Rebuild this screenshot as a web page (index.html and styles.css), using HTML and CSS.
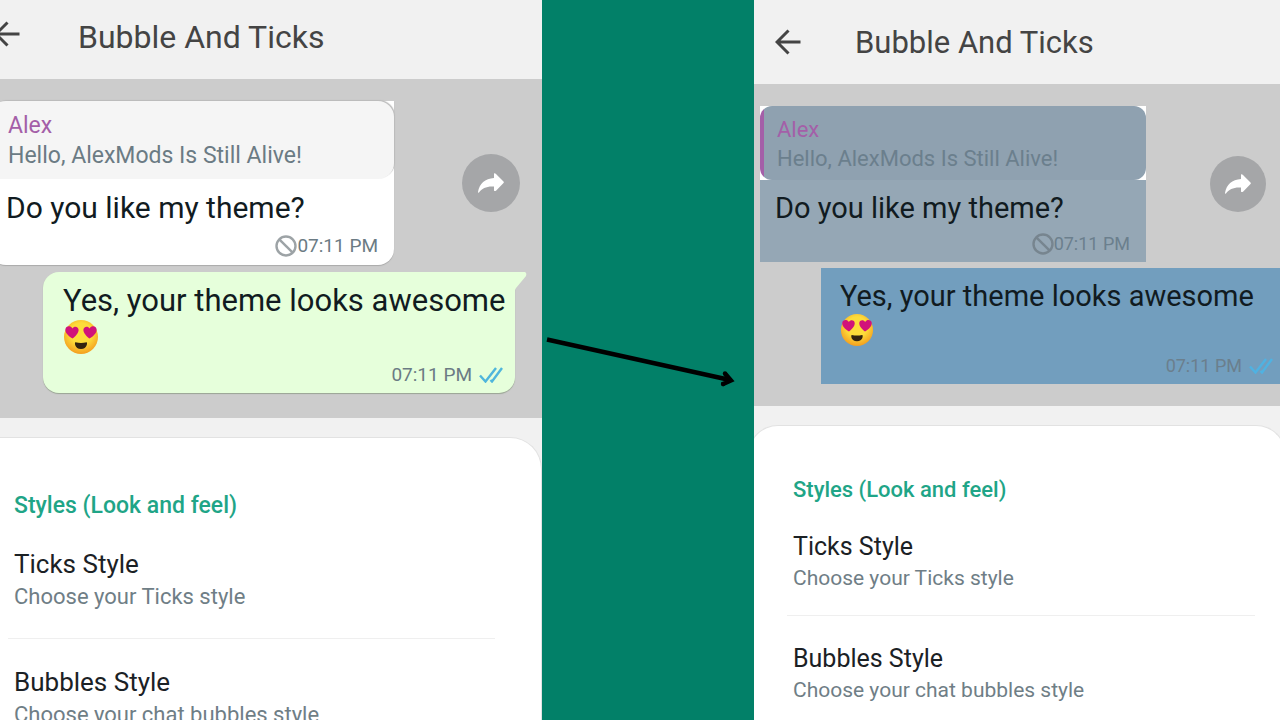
FILE: index.html
```html
<!DOCTYPE html>
<html lang="en">
<head>
<meta charset="utf-8">
<title>Bubble And Ticks</title>
<link rel="stylesheet" href="styles.css">
</head>
<body>
<svg class="defs" aria-hidden="true">
  <defs>
    <radialGradient id="face" cx="50%" cy="40%" r="62%">
      <stop offset="0.5" stop-color="#fddc3a"/>
      <stop offset="1" stop-color="#f39a1d"/>
    </radialGradient>
    <symbol id="back" viewBox="0 0 26 26"><path d="M25.500 13H3M13.500 1.500L2 13L13.500 24.500" fill="none" stroke="currentColor" stroke-width="3"/></symbol>
    <symbol id="share" viewBox="0 0 26 20"><path d="M16 0.500Q17 0 18 1L25.500 8.500Q26.300 9.300 25.500 10L18 17.800Q16.500 18.500 16 17.500V13.500C9 13 4 15 .8 19.800Q0 20 0 19C1.500 10.500 7 5.500 16 5Z" fill="#fff"/></symbol>
    <symbol id="ban" viewBox="0 0 22 22"><g fill="none" stroke="currentColor" stroke-width="2.400"><circle cx="11" cy="11" r="9.500"/><path d="M4.300 4.300L17.700 17.700"/></g></symbol>
    <symbol id="ticks" viewBox="0 0 24 16"><path d="M1 8.500L6.500 14.500L17 1M11.500 13L13 14.500L23 1" fill="none" stroke="currentColor" stroke-width="2.400"/></symbol>
    <symbol id="love" viewBox="0 0 36 36">
      <circle cx="18" cy="18" r="17" fill="url(#face)"/>
      <path d="M9.500 19.500C5 17 2 13.500 2.400 10.300C2.800 7 7.400 6.200 9.300 9.400C11.400 6.400 15.700 7.600 15.600 11C15.500 14 12.500 17.300 9.500 19.500Z" fill="#d1127a"/>
      <path d="M26.500 19.500C31 17 34 13.500 33.600 10.300C33.200 7 28.600 6.200 26.700 9.400C24.600 6.400 20.300 7.600 20.400 11C20.500 14 23.500 17.300 26.500 19.500Z" fill="#d1127a"/>
      <path d="M12.500 23.300Q18 24.500 23.500 23.300C24.600 23.100 24.600 30 18 30S11.400 23.100 12.500 23.300Z" fill="#33240f"/>
    </symbol>
  </defs>
</svg>
<main class="compare">
  <section class="phone before">
    <header class="bar">
      <button class="back" aria-label="Back"><svg><use href="#back"/></svg></button>
      <h1 class="bar-title">Bubble And Ticks</h1>
    </header>
    <div class="chat">
      <div class="incoming">
        <article class="bubble-in">
          <div class="quote-back">
            <div class="quote"><p class="quote-name">Alex</p><p class="quote-text">Hello, AlexMods Is Still Alive!</p></div>
          </div>
          <p class="message">Do you like my theme?</p>
          <p class="meta"><svg class="ban"><use href="#ban"/></svg>07:11 PM</p>
        </article>
        <button class="share" aria-label="Forward"><svg><use href="#share"/></svg></button>
      </div>
      <article class="bubble-out">
        <svg class="tail" viewBox="0 0 12 18"><path d="M0 0H10Q12 1 11 4L1 16L0 18Z" fill="#e6ffdb"/></svg>
        <p class="message">Yes, your theme looks awesome</p>
        <svg class="emoji" role="img" aria-label="😍"><use href="#love"/></svg>
        <p class="meta">07:11 PM<svg class="ticks"><use href="#ticks"/></svg></p>
      </article>
    </div>
    <div class="sheet">
      <h2 class="sheet-title">Styles (Look and feel)</h2>
      <ul class="options">
        <li class="option"><button><span class="name">Ticks Style</span><span class="hint">Choose your Ticks style</span></button></li>
        <li class="option"><button><span class="name">Bubbles Style</span><span class="hint">Choose your chat bubbles style</span></button></li>
      </ul>
    </div>
  </section>

  <div class="middle">
    <svg class="arrow" viewBox="0 0 212 80" aria-hidden="true"><path d="M5 19.500L188 60M183 53.500L189 60.500L180 64.500" fill="none" stroke="#000" stroke-width="4.400"/><circle cx="183" cy="53.500" r="2.200"/><circle cx="181" cy="64" r="2.200"/></svg>
  </div>

  <section class="phone after">
    <header class="bar">
      <button class="back" aria-label="Back"><svg><use href="#back"/></svg></button>
      <h1 class="bar-title">Bubble And Ticks</h1>
    </header>
    <div class="chat">
      <div class="incoming">
        <article class="bubble-in">
          <div class="quote-back">
            <div class="quote"><p class="quote-name">Alex</p><p class="quote-text">Hello, AlexMods Is Still Alive!</p></div>
          </div>
          <p class="message">Do you like my theme?</p>
          <p class="meta"><svg class="ban"><use href="#ban"/></svg>07:11 PM</p>
        </article>
        <button class="share" aria-label="Forward"><svg><use href="#share"/></svg></button>
      </div>
      <article class="bubble-out">
        <p class="message">Yes, your theme looks awesome</p>
        <svg class="emoji" role="img" aria-label="😍"><use href="#love"/></svg>
        <p class="meta">07:11 PM<svg class="ticks"><use href="#ticks"/></svg></p>
      </article>
    </div>
    <div class="sheet">
      <h2 class="sheet-title">Styles (Look and feel)</h2>
      <ul class="options">
        <li class="option"><button><span class="name">Ticks Style</span><span class="hint">Choose your Ticks style</span></button></li>
        <li class="option"><button><span class="name">Bubbles Style</span><span class="hint">Choose your chat bubbles style</span></button></li>
      </ul>
    </div>
  </section>
</main>
</body>
</html>
```
FILE: styles.css
```css
* { box-sizing: border-box; }
body, h1, h2, p, ul { margin: 0; padding: 0; }
body { font-family: Roboto, "Liberation Sans", sans-serif; background: #028068; }
button { border: 0; padding: 0; background: none; font: inherit; color: inherit; text-align: left; }
svg { display: block; flex: none; }
.defs { position: absolute; width: 0; height: 0; }

.compare { display: grid; grid-template-columns: 542fr 212fr 526fr; height: 100vh; overflow: hidden; }
.phone { display: flex; flex-direction: column; min-width: 0; overflow: hidden; background: #f1f1f1; }
.middle { display: flex; align-items: center; background: #028068; }
.arrow { width: 100%; }

/* Top bar */
.bar { display: flex; align-items: center; flex: none; color: #444; }
.back svg { width: 26px; height: 26px; }
.bar-title { font-weight: 400; white-space: nowrap; }

/* Conversation */
.chat { display: flex; flex-direction: column; flex: none; background: #ccc; }
.incoming { display: flex; align-items: center; justify-content: space-between; }
.quote-name { color: #a45fa8; }
.quote-text, .meta { color: #6b7b84; }
.message { color: #111b21; white-space: nowrap; }
.meta { display: flex; align-items: center; justify-content: flex-end; }
.ban { width: 22px; height: 22px; color: #9da3a6; }
.ticks { width: 24px; height: 16px; margin-left: 7px; color: #4fb6dc; }
.emoji { width: 36px; height: 36px; }
.share { display: grid; place-items: center; border-radius: 50%; background: #a5a6a8; }
.share svg { width: 26px; height: 20px; }

/* Settings sheet */
.sheet { flex: 1; background: #fff; border: 1px solid #e2e2e2; border-bottom: 0; }
.sheet-title { font-weight: 500; color: #1fa587; }
.options { list-style: none; }
.option + .option { border-top: 1px solid #efefef; }
.name, .hint { display: block; white-space: nowrap; }
.name { color: #1b2125; }
.hint { color: #6f7e86; }

/* Stock theme */
.before .bar { height: 79px; padding-bottom: 5px; gap: 58px; }
.before .back { margin: -6px 0 0 -6px; }
.before .bar-title { font-size: 32px; line-height: 40px; }
.before .chat { height: 339px; padding: 22px 22px 24px 0; gap: 7px; }
.before .bubble-in { width: 404px; height: 164px; margin-left: -10px; padding-right: 16px; border-radius: 16px; border-top-right-radius: 0; background: #fff; box-shadow: 0 1px 1px #aaa; }
.before .quote-back { margin-right: -16px; }
.before .quote { height: 78px; padding: 10px 0 0 18px; border-radius: 16px; border-bottom-left-radius: 0; background: #f5f5f5; box-shadow: 1px -1px 1px #bbb; }
.before .quote-name, .before .quote-text { font-size: 23px; line-height: 30px; }
.before .message { font-size: 30px; line-height: 36px; }
.before .bubble-in .message { padding: 11px 0 0 16px; }
.before .bubble-out .message { font-size: 31px; }
.before .meta { font-size: 19px; line-height: 24px; }
.before .bubble-in .meta { margin-top: 8px; }
.before .share { width: 58px; height: 58px; }
.before .bubble-out { position: relative; align-self: flex-end; width: 472px; height: 121px; margin-right: 5px; padding: 11px 12px 0 20px; border-radius: 16px; border-top-right-radius: 0; background: #e6ffdb; box-shadow: 0 1px 1px #9aa594; }
.before .tail { position: absolute; top: 0; left: 100%; width: 12px; height: 18px; }
.before .bubble-out .meta { margin-top: 8px; }
.before .sheet { margin-top: 19px; padding: 53px 46px 0 8px; border-left: 0; border-top-right-radius: 32px; }
.before .sheet-title { padding-left: 6px; font-size: 23px; line-height: 30px; }
.before .option { height: 117px; padding: 26px 0 0 6px; }
.before .name { font-size: 26px; line-height: 34px; }
.before .hint { font-size: 22px; line-height: 32px; }

/* Modded theme */
.after .bar { height: 84px; padding: 0 0 0 21px; gap: 54px; }
.after .bar-title { padding-top: 2px; font-size: 31px; line-height: 40px; }
.after .chat { height: 322px; padding: 22px 0 22px 6px; gap: 6px; }
.after .incoming { padding-right: 14px; }
.after .bubble-in { width: 386px; height: 156px; padding-right: 16px; background: #95a7b5; }
.after .quote-back { margin-right: -16px; background: #fff; }
.after .quote { height: 74px; padding: 9px 0 0 17px; border-radius: 12px; background: linear-gradient(to right, #a45fa8 4px, #8fa1b0 4px); }
.after .quote-name, .after .quote-text { font-size: 22px; line-height: 29px; }
.after .message { font-size: 29px; line-height: 34px; }
.after .bubble-in .message { padding: 11px 0 0 15px; }
.after .meta { font-size: 18px; line-height: 24px; }
.after .quote-text, .after .meta { color: #6b7f8d; }
.after .ban { color: #77858f; }
.after .bubble-in .meta { margin-top: 7px; }
.after .share { width: 56px; height: 56px; }
.after .bubble-out { margin-left: 61px; height: 116px; padding: 11px 7px 0 19px; background: #729ebe; }
.after .emoji { width: 34px; height: 34px; }
.after .bubble-out .meta { margin-top: 7px; }
.after .ticks { color: #4fb2e2; }
.after .sheet { margin: 19px -6px 0; padding: 49px 30px 0 38px; border-radius: 30px 30px 0 0; }
.after .sheet-title { padding-left: 6px; font-size: 22px; line-height: 29px; }
.after .option { height: 111px; padding: 27px 0 0 6px; }
.after .name { font-size: 25px; line-height: 32px; }
.after .hint { font-size: 21px; line-height: 30px; }
```
